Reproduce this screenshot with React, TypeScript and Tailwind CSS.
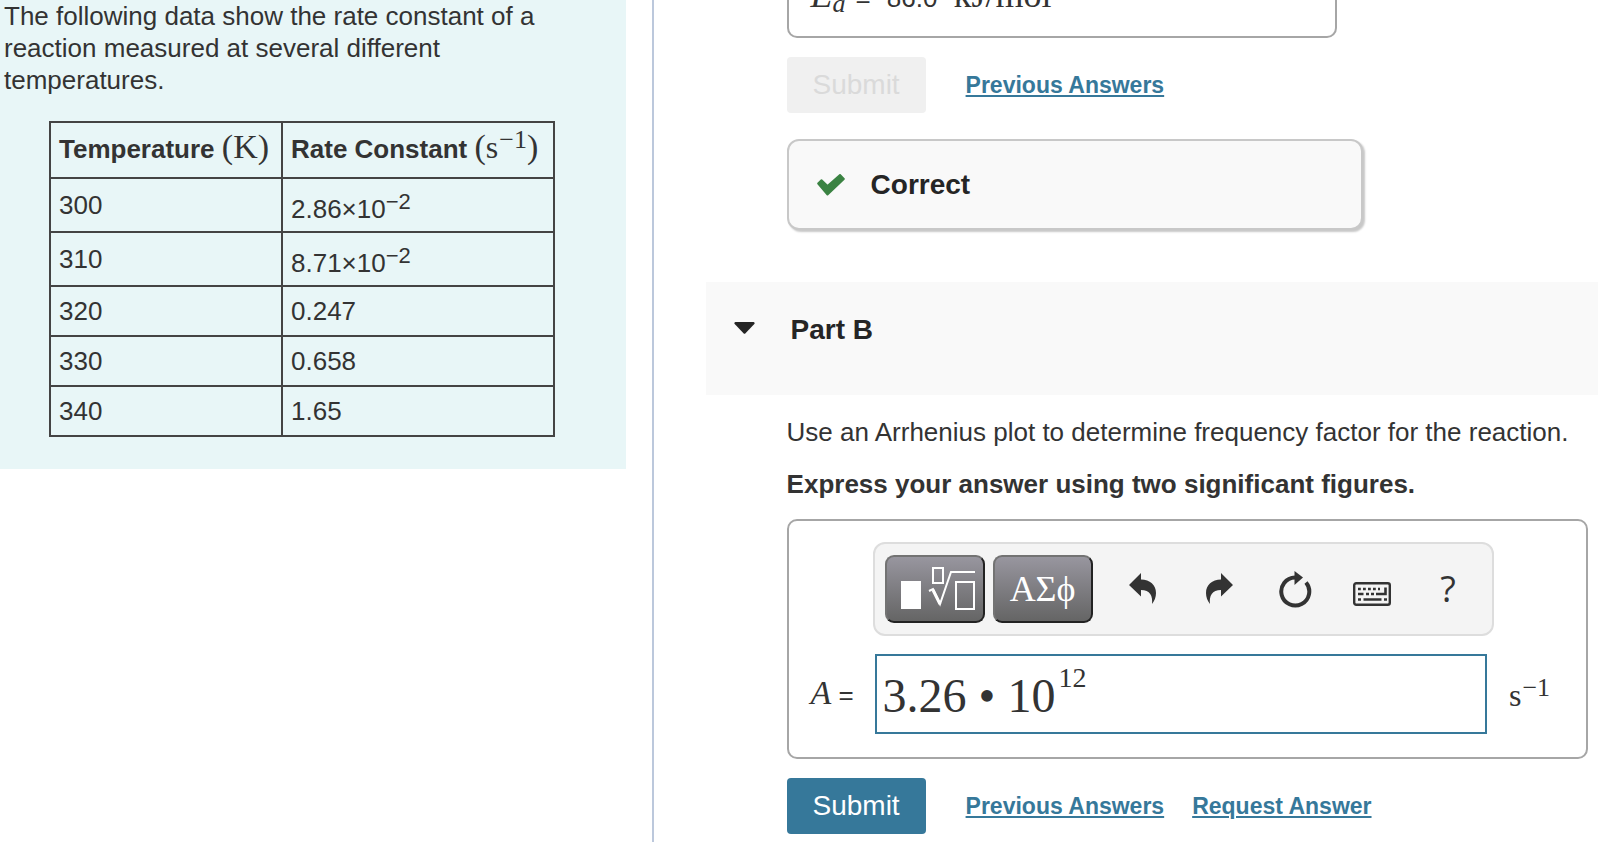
import { useState } from 'react';
import type { ReactNode } from 'react';

const rows = [
  { temperature: '300', rate: '2.86×10', exponent: '−2' },
  { temperature: '310', rate: '8.71×10', exponent: '−2' },
  { temperature: '320', rate: '0.247' },
  { temperature: '330', rate: '0.658' },
  { temperature: '340', rate: '1.65' },
];

function PerSecond() {
  return (
    <span className="font-['Liberation_Serif',serif] text-[32px] leading-8 font-normal whitespace-nowrap">
      s<sup className="top-0 ml-px align-[10px] text-[26px] leading-[0]">−1</sup>
    </span>
  );
}

function IntroPanel() {
  return (
    <section className="bg-[#e8f6f7] pb-8 pl-1">
      <p className="max-w-[560px] text-[26px] leading-8">
        The following data show the rate constant of a reaction measured at several different
        temperatures.
      </p>
      <table className="mt-[25px] ml-[45px] w-[506px] table-fixed border-collapse text-[26px] leading-8">
        <thead>
          <tr className="h-14 text-left">
            <th className="w-[232px] border-2 border-[#444] px-2 pb-1 whitespace-nowrap">
              Temperature{' '}
              <span className="font-['Liberation_Serif',serif] text-[34px] font-normal">(K)</span>
            </th>
            <th className="border-2 border-[#444] px-2 pb-1 whitespace-nowrap">
              Rate Constant{' '}
              <span className="font-['Liberation_Serif',serif] text-[34px] font-normal">
                (<PerSecond />)
              </span>
            </th>
          </tr>
        </thead>
        <tbody>
          {rows.map((row) => (
            <tr key={row.temperature} className={row.exponent ? 'h-[54px]' : 'h-[50px]'}>
              <td className="border-2 border-[#444] px-2">{row.temperature}</td>
              <td className="border-2 border-[#444] px-2">
                {row.rate}
                {row.exponent && (
                  <sup className="top-0 align-[9px] text-[22px] leading-8">{row.exponent}</sup>
                )}
              </td>
            </tr>
          ))}
        </tbody>
      </table>
    </section>
  );
}

function TextLink({ children }: { children: ReactNode }) {
  return (
    <a href="#" className="text-[23px] leading-8 font-bold text-[#36789a] underline decoration-2 underline-offset-2">
      {children}
    </a>
  );
}

function ToolButton({ label, children }: { label: string; children: ReactNode }) {
  return (
    <button type="button" aria-label={label} className="flex h-12 w-12 items-center justify-center text-[#333]">
      {children}
    </button>
  );
}

function PaletteButton({ label, children }: { label: string; children: ReactNode }) {
  return (
    <button
      type="button"
      aria-label={label}
      className="flex h-[68px] w-[100px] items-center justify-center rounded-[9px] border-2 border-t-[#737373] border-r-[#222] border-b-[#222] border-l-[#737373] bg-linear-to-b from-[#98969f] to-[#656565] text-white"
    >
      {children}
    </button>
  );
}

function Toolbar() {
  return (
    <div className="flex h-[94px] items-center rounded-xl border-2 border-[#ddd] bg-[#f4f4f4] pr-5 pl-[10px]">
      <div className="flex gap-2">
        <PaletteButton label="Templates">
          <svg width="80" height="48" viewBox="0 0 80 48" fill="none" stroke="currentColor" strokeWidth="2">
            <rect x="6" y="16" width="20" height="28" fill="currentColor" stroke="none" />
            <rect x="38" y="3" width="10" height="15" />
            <path d="M34 26l4-2 7 15L56 7h24" />
            <path d="M38 25l7 14" strokeWidth="3" />
            <rect x="61" y="17" width="18" height="27" />
          </svg>
        </PaletteButton>
        <PaletteButton label="Symbols">
          <span className="font-['Liberation_Serif',serif] text-[36px] leading-none">ΑΣϕ</span>
        </PaletteButton>
      </div>
      <div className="ml-[26px] flex flex-1 items-center justify-between">
        <ToolButton label="Undo">
          <svg width="28" height="32" viewBox="0 0 28 32" fill="currentColor">
            <path d="M0 12L12 0v6.500C21 6.500 27 12 27 20c0 4-1.500 8-4 11 1-8-2-14-11-14v6.500z" />
          </svg>
        </ToolButton>
        <ToolButton label="Redo">
          <svg width="28" height="32" viewBox="0 0 28 32" fill="currentColor">
            <path d="M28 12L16 0v6.500C7 6.500 1 12 1 20c0 4 1.500 8 4 11-1-8 2-14 11-14v6.500z" />
          </svg>
        </ToolButton>
        <ToolButton label="Reset">
          <svg width="34" height="38" viewBox="0 0 34 38" fill="none">
            <path d="M17 7.500A14 14 0 1 0 28 12.500" stroke="currentColor" strokeWidth="4" />
            <path d="M16.500 1l8.500 6.500-8.500 7.500z" fill="currentColor" />
          </svg>
        </ToolButton>
        <ToolButton label="Keyboard shortcuts">
          <svg width="38" height="34" viewBox="0 -10 38 34" fill="none" stroke="currentColor">
            <rect x="1.200" y="1.200" width="35.600" height="21.600" rx="2" strokeWidth="2.400" />
            <path d="M5 7h22" strokeWidth="2.600" strokeDasharray="2.800 2.200" />
            <path d="M5 12h5.500m2.500 0h3m2 0h3m2 0h3M26 12h6.500V5.500" strokeWidth="2.600" />
            <path d="M5 17.500h3m2.500 0h18m2.500 0h3" strokeWidth="2.600" />
          </svg>
        </ToolButton>
        <ToolButton label="Help">
          <span className="font-['Open_Sans',sans-serif] text-[36px] leading-none">?</span>
        </ToolButton>
      </div>
    </div>
  );
}

function AnswerBox() {
  const [base, setBase] = useState('3.26 • 10');
  const [exponent, setExponent] = useState('12');

  return (
    <div className="rounded-[10px] border-2 border-[#a6a6a6] pt-[21px] pr-[35px] pb-[23px] pl-[22px]">
      <div className="mr-[57px] ml-[62px]">
        <Toolbar />
      </div>
      <div className="mt-[18px] flex items-center">
        <label htmlFor="answer" className="w-16 text-[26px] leading-8">
          <i className="font-['Liberation_Serif',serif] text-[34px]">A</i> =
        </label>
        <div className="flex h-20 flex-1 items-center border-2 border-[#36789a] bg-white px-[6px] pt-1 font-['Liberation_Serif',serif]">
          <input
            id="answer"
            value={base}
            onChange={(e) => setBase(e.target.value)}
            className="w-[176px] text-[48px] leading-[56px] outline-none"
          />
          <input
            aria-label="Exponent"
            value={exponent}
            onChange={(e) => setExponent(e.target.value)}
            className="mb-9 min-w-0 flex-1 text-[28px] leading-8 outline-none"
          />
        </div>
        <div className="w-16 pt-1 pl-[22px]">
          <PerSecond />
        </div>
      </div>
    </div>
  );
}

export default function App() {
  return (
    <div className="flex min-h-screen bg-white font-['Liberation_Sans',Arial,sans-serif] text-[#333]">
      <aside className="w-[40.9%] min-w-[620px] shrink-0 border-r-2 border-[#bcc8dc] pr-[26px]">
        <IntroPanel />
      </aside>

      <main className="min-w-0 flex-1 pl-[52px]">
        {/* Part A */}
        <section className="pr-[10px] pl-[81px]">
          <div className="flex h-[38px] max-w-[550px] items-end rounded-b-[10px] border-2 border-t-0 border-[#a6a6a6] pb-[22px] pl-[22px]">
            <p className="-mt-6 flex items-baseline text-[26px] leading-8">
              <span>
                <i className="font-['Liberation_Serif',serif] text-[36px]">E</i>
                <sub className="bottom-0 align-[-5px] font-['Liberation_Serif',serif] text-[26px] italic">a</sub>
              </span>
              <span className="ml-[10px]">=</span>
              <span className="ml-4">86.0</span>
              <span className="ml-4 font-['Liberation_Serif',serif] text-[36px]">kJ/mol</span>
            </p>
          </div>
          <div className="mt-[19px] flex items-center">
            <button type="button" disabled className="h-14 w-[139px] rounded bg-[#f0f0f0] text-[28px] text-[#dadada]">
              Submit
            </button>
            <div className="ml-10">
              <TextLink>Previous Answers</TextLink>
            </div>
          </div>
          <div className="mt-[26px] flex h-[91px] max-w-[576px] items-center rounded-xl border-2 border-[#c8c8c8] bg-[#f9f9f9] pl-7 shadow-[2px_2px_2px_#c8c8c8]">
            <svg
              width="28"
              height="22"
              viewBox="0 0 28 22"
              fill="#3b8343"
              stroke="#3b8343"
              strokeWidth="2"
              strokeLinejoin="round"
            >
              <path d="M1.200 9.500L4.500 6.200 10.500 12 23 1 26.800 5 10.500 20.500z" />
            </svg>
            <h3 className="ml-[26px] text-[28px] leading-8 font-bold text-[#252525]">Correct</h3>
          </div>
        </section>

        {/* Part B */}
        <section className="mt-[52px]">
          <div className="flex h-[113px] items-start bg-[#f9f9f9] pt-8 pl-7">
            <button type="button" className="flex items-center text-[28px] leading-8 font-bold text-[#252525]">
              <svg width="21" height="12" viewBox="0 0 21 12" fill="currentColor" className="mb-1">
                <path d="M1.500 0h18a1.200 1.200 0 0 1 .8 2l-8.800 9.300a1.400 1.400 0 0 1-2 0L.700 2a1.200 1.200 0 0 1 .8-2z" />
              </svg>
              <span className="ml-9">Part B</span>
            </button>
          </div>
          <div className="pr-[10px] pl-[81px]">
            <p className="mt-[21px] text-[26px] leading-8">
              Use an Arrhenius plot to determine frequency factor for the reaction.
            </p>
            <p className="mt-5 mb-[19px] text-[26px] leading-8 font-bold">
              Express your answer using two significant figures.
            </p>
            <AnswerBox />
            <div className="mt-[19px] flex items-center">
              <button type="button" className="h-14 w-[139px] rounded bg-[#36789a] text-[28px] text-white">
                Submit
              </button>
              <div className="ml-10 flex gap-7">
                <TextLink>Previous Answers</TextLink>
                <TextLink>Request Answer</TextLink>
              </div>
            </div>
          </div>
        </section>
      </main>
    </div>
  );
}
